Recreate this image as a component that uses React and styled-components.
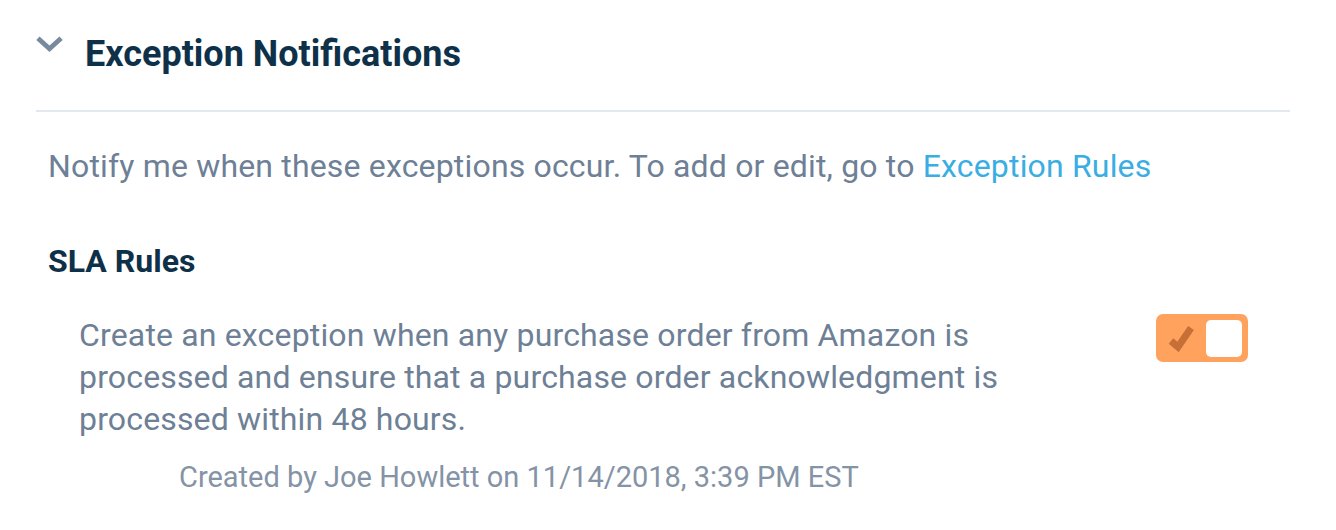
import React, { useState } from "react";
import styled, { createGlobalStyle } from "styled-components";

const GlobalStyle = createGlobalStyle`
  body {
    margin: 0;
    background: #ffffff;
    font-family: Roboto, "Liberation Sans", sans-serif;
  }
`;

const rule = {
  text: "Create an exception when any purchase order from Amazon is processed and ensure that a purchase order acknowledgment is processed within 48 hours.",
  author: "Joe Howlett",
  created: "11/14/2018, 3:39 PM EST",
};

const App = () => {
  const [enabled, setEnabled] = useState(true);

  return (
    <>
      <GlobalStyle />
      <Section>
        <Header>
          <Chevron viewBox="0 0 28 18">
            <path d="M2 3 L14 14 L26 3" fill="none" stroke="#788a9d" strokeWidth="5" />
          </Chevron>
          <Title>Exception Notifications</Title>
        </Header>
        <Divider />
        <Intro>
          Notify me when these exceptions occur. To add or edit, go to{" "}
          <RulesLink href="#">Exception Rules</RulesLink>
        </Intro>
        <GroupTitle>SLA Rules</GroupTitle>
        <RuleRow>
          <RuleBody>
            <RuleText>{rule.text}</RuleText>
            <Meta>
              Created by {rule.author} on {rule.created}
            </Meta>
          </RuleBody>
          <Toggle $on={enabled} onClick={() => setEnabled(!enabled)}>
            <CheckIcon viewBox="0 0 28 28">
              <path d="M4 17 L11 23 L24 4" fill="none" stroke="#c66f36" strokeWidth="7" />
            </CheckIcon>
            <Knob />
          </Toggle>
        </RuleRow>
      </Section>
    </>
  );
};

const Section = styled.div`
  padding: 26px 46px 0 36px;
`;

const Header = styled.div`
  display: flex;
  align-items: center;
  gap: 22px;
  height: 56px;
`;

const Chevron = styled.svg`
  width: 27px;
  height: 18px;
  align-self: flex-start;
  margin-top: 9px;
`;

const Title = styled.h2`
  margin: 0;
  font-size: 36px;
  font-weight: 700;
  color: #0e3149;
`;

const Divider = styled.hr`
  margin: 28px 0 0;
  border: none;
  height: 2px;
  background: #e3e7ee;
`;

const Intro = styled.p`
  margin: 34px 0 0 12px;
  font-size: 32px;
  line-height: 40px;
  letter-spacing: 0.17px;
  color: #6e8096;
`;

const RulesLink = styled.a`
  color: #3aaee2;
  text-decoration: none;
`;

const GroupTitle = styled.h3`
  margin: 57px 0 0 12px;
  font-size: 32px;
  line-height: 36px;
  font-weight: 700;
  color: #0e3149;
`;

const RuleRow = styled.div`
  display: flex;
  justify-content: space-between;
  align-items: flex-start;
  margin: 35px 42px 0 43px;
`;

const RuleBody = styled.div`
  width: 980px;
`;

const RuleText = styled.p`
  margin: 0;
  font-size: 32px;
  line-height: 42px;
  letter-spacing: 0.16px;
  color: #6e8096;
`;

const Meta = styled.div`
  margin: 20px 0 0 100px;
  font-size: 29px;
  line-height: 34px;
  letter-spacing: 0;
  color: #8493a5;
`;

const Toggle = styled.button`
  display: flex;
  align-items: center;
  justify-content: space-between;
  width: 92px;
  height: 48px;
  padding: 0 6px 0 11px;
  border: none;
  border-radius: 7px;
  background: ${(p) => (p.$on ? "#ffa25e" : "#d3dae3")};
  cursor: pointer;
`;

const CheckIcon = styled.svg`
  width: 28px;
  height: 28px;
`;

const Knob = styled.span`
  width: 36px;
  height: 37px;
  border-radius: 5px;
  background: #ffffff;
`;

export default App;
